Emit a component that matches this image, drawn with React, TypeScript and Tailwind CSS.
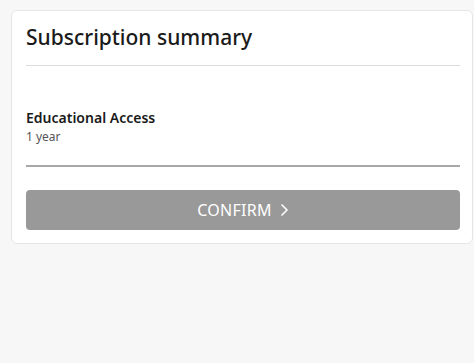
import React from "react"

export default function App() {
  return (
    <div className="min-h-[363px] w-[474px] bg-[#f7f7f7] pt-[10px] font-['Noto_Sans',sans-serif]">
      <div className="ml-[11px] w-[462px] rounded-[6px] border border-[#e6e6e6] bg-white pl-[14px] pr-[12px] pt-[12px] pb-[13px]">
        <h2 className="text-[21px] leading-[28px] font-medium text-[#1a1a1a]">Subscription summary</h2>
        <div className="mt-[14px] h-px bg-[#dcdcdc]" />

        <div className="pt-[42px]">
          <div className="text-[14px] leading-[20px] font-semibold text-[#1a1a1a]">Educational Access</div>
          <div className="mt-[0px] text-[12px] leading-[17px] text-[#555]">1 year</div>
        </div>
        <div className="mt-[20px] h-[2px] bg-[#a8a8a8]" />

        <button className="mt-[23px] flex h-[40px] w-full items-center justify-center gap-[8px] rounded-[4px] bg-[#999999] text-[16px] tracking-[0.3px] text-white">
          CONFIRM
          <svg width="9" height="14" viewBox="0 0 9 14" fill="none">
            <path d="M1.5 1.5 L7 7 L1.5 12.5" stroke="white" strokeWidth="1.5" />
          </svg>
        </button>
      </div>
    </div>
  )
}
